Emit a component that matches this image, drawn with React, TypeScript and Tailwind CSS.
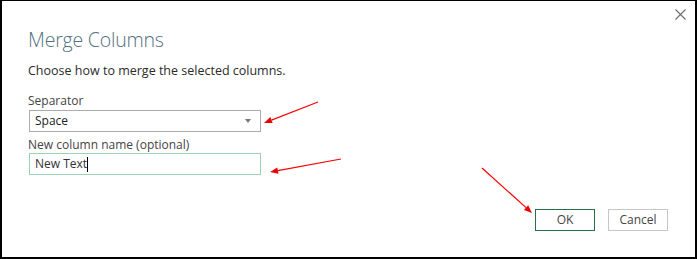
import React from "react"

function Arrow({ x1, y1, x2, y2 }: { x1: number; y1: number; x2: number; y2: number }) {
  const a = Math.atan2(y2 - y1, x2 - x1)
  const len = 8
  const w = 3.2
  const bx = x2 - len * Math.cos(a)
  const by = y2 - len * Math.sin(a)
  const px = -Math.sin(a) * w
  const py = Math.cos(a) * w
  return (
    <g>
      <line x1={x1} y1={y1} x2={bx} y2={by} stroke="#f00" strokeWidth={1.2} />
      <polygon points={`${x2},${y2} ${bx + px},${by + py} ${bx - px},${by - py}`} fill="#e00" />
    </g>
  )
}

export default function App() {
  return (
    <div className="relative w-[697px] h-[259px] bg-white border-black border-t border-l-2 border-r-2 border-b-2 font-['Open_Sans','Noto_Sans',sans-serif] text-[#333]">
      <button className="absolute right-[8px] top-[6px] w-[14px] h-[14px] flex items-center justify-center">
        <svg width="11" height="11" viewBox="0 0 11 11">
          <path d="M0.5 0.5L10.5 10.5M10.5 0.5L0.5 10.5" stroke="#6b6b6b" strokeWidth="1.1" />
        </svg>
      </button>

      <div className="pl-[26px] pt-[26px] flex flex-col">
        <h1 className="text-[19.5px] leading-[26px] font-light text-[#557080] tracking-[-0.2px]">Merge Columns</h1>
        <p className="mt-[9px] text-[12.5px] leading-[17px] text-[#2b2b2b]">Choose how to merge the selected columns.</p>

        <label className="mt-[14px] text-[12px] leading-[16px] text-[#444]">Separator</label>
        <div className="mt-[1px] ml-[1px] w-[232px] h-[22px] border border-[#ababab] flex items-center justify-between pl-[5px] pr-[9px]">
          <span className="text-[12px] text-[#222]">Space</span>
          <span className="w-0 h-0 border-l-[3.5px] border-r-[3.5px] border-t-[4px] border-l-transparent border-r-transparent border-t-[#777]" />
        </div>

        <label className="mt-[5px] text-[12px] leading-[16px] text-[#444]">New column name (optional)</label>
        <div className="ml-[1px] w-[232px] h-[22px] border border-[#9ad2b3] flex items-center pl-[5px]">
          <span className="text-[12px] text-[#333]">New Text</span>
          <span className="w-[1px] h-[15px] bg-black" />
        </div>
      </div>

      <div className="absolute right-[27px] top-[208px] flex gap-[13px]">
        <button className="w-[60px] h-[22px] border border-[#217346] text-[12px] text-[#444]">OK</button>
        <button className="w-[60px] h-[22px] border border-[#c6c6c6] text-[12px] text-[#444]">Cancel</button>
      </div>

      <svg className="absolute left-[-2px] top-[-1px] pointer-events-none" width="697" height="259">
        <Arrow x1={318} y1={102} x2={264} y2={123} />
        <Arrow x1={341} y1={159} x2={270} y2={172} />
        <Arrow x1={482} y1={168} x2={532} y2={213} />
      </svg>
    </div>
  )
}
